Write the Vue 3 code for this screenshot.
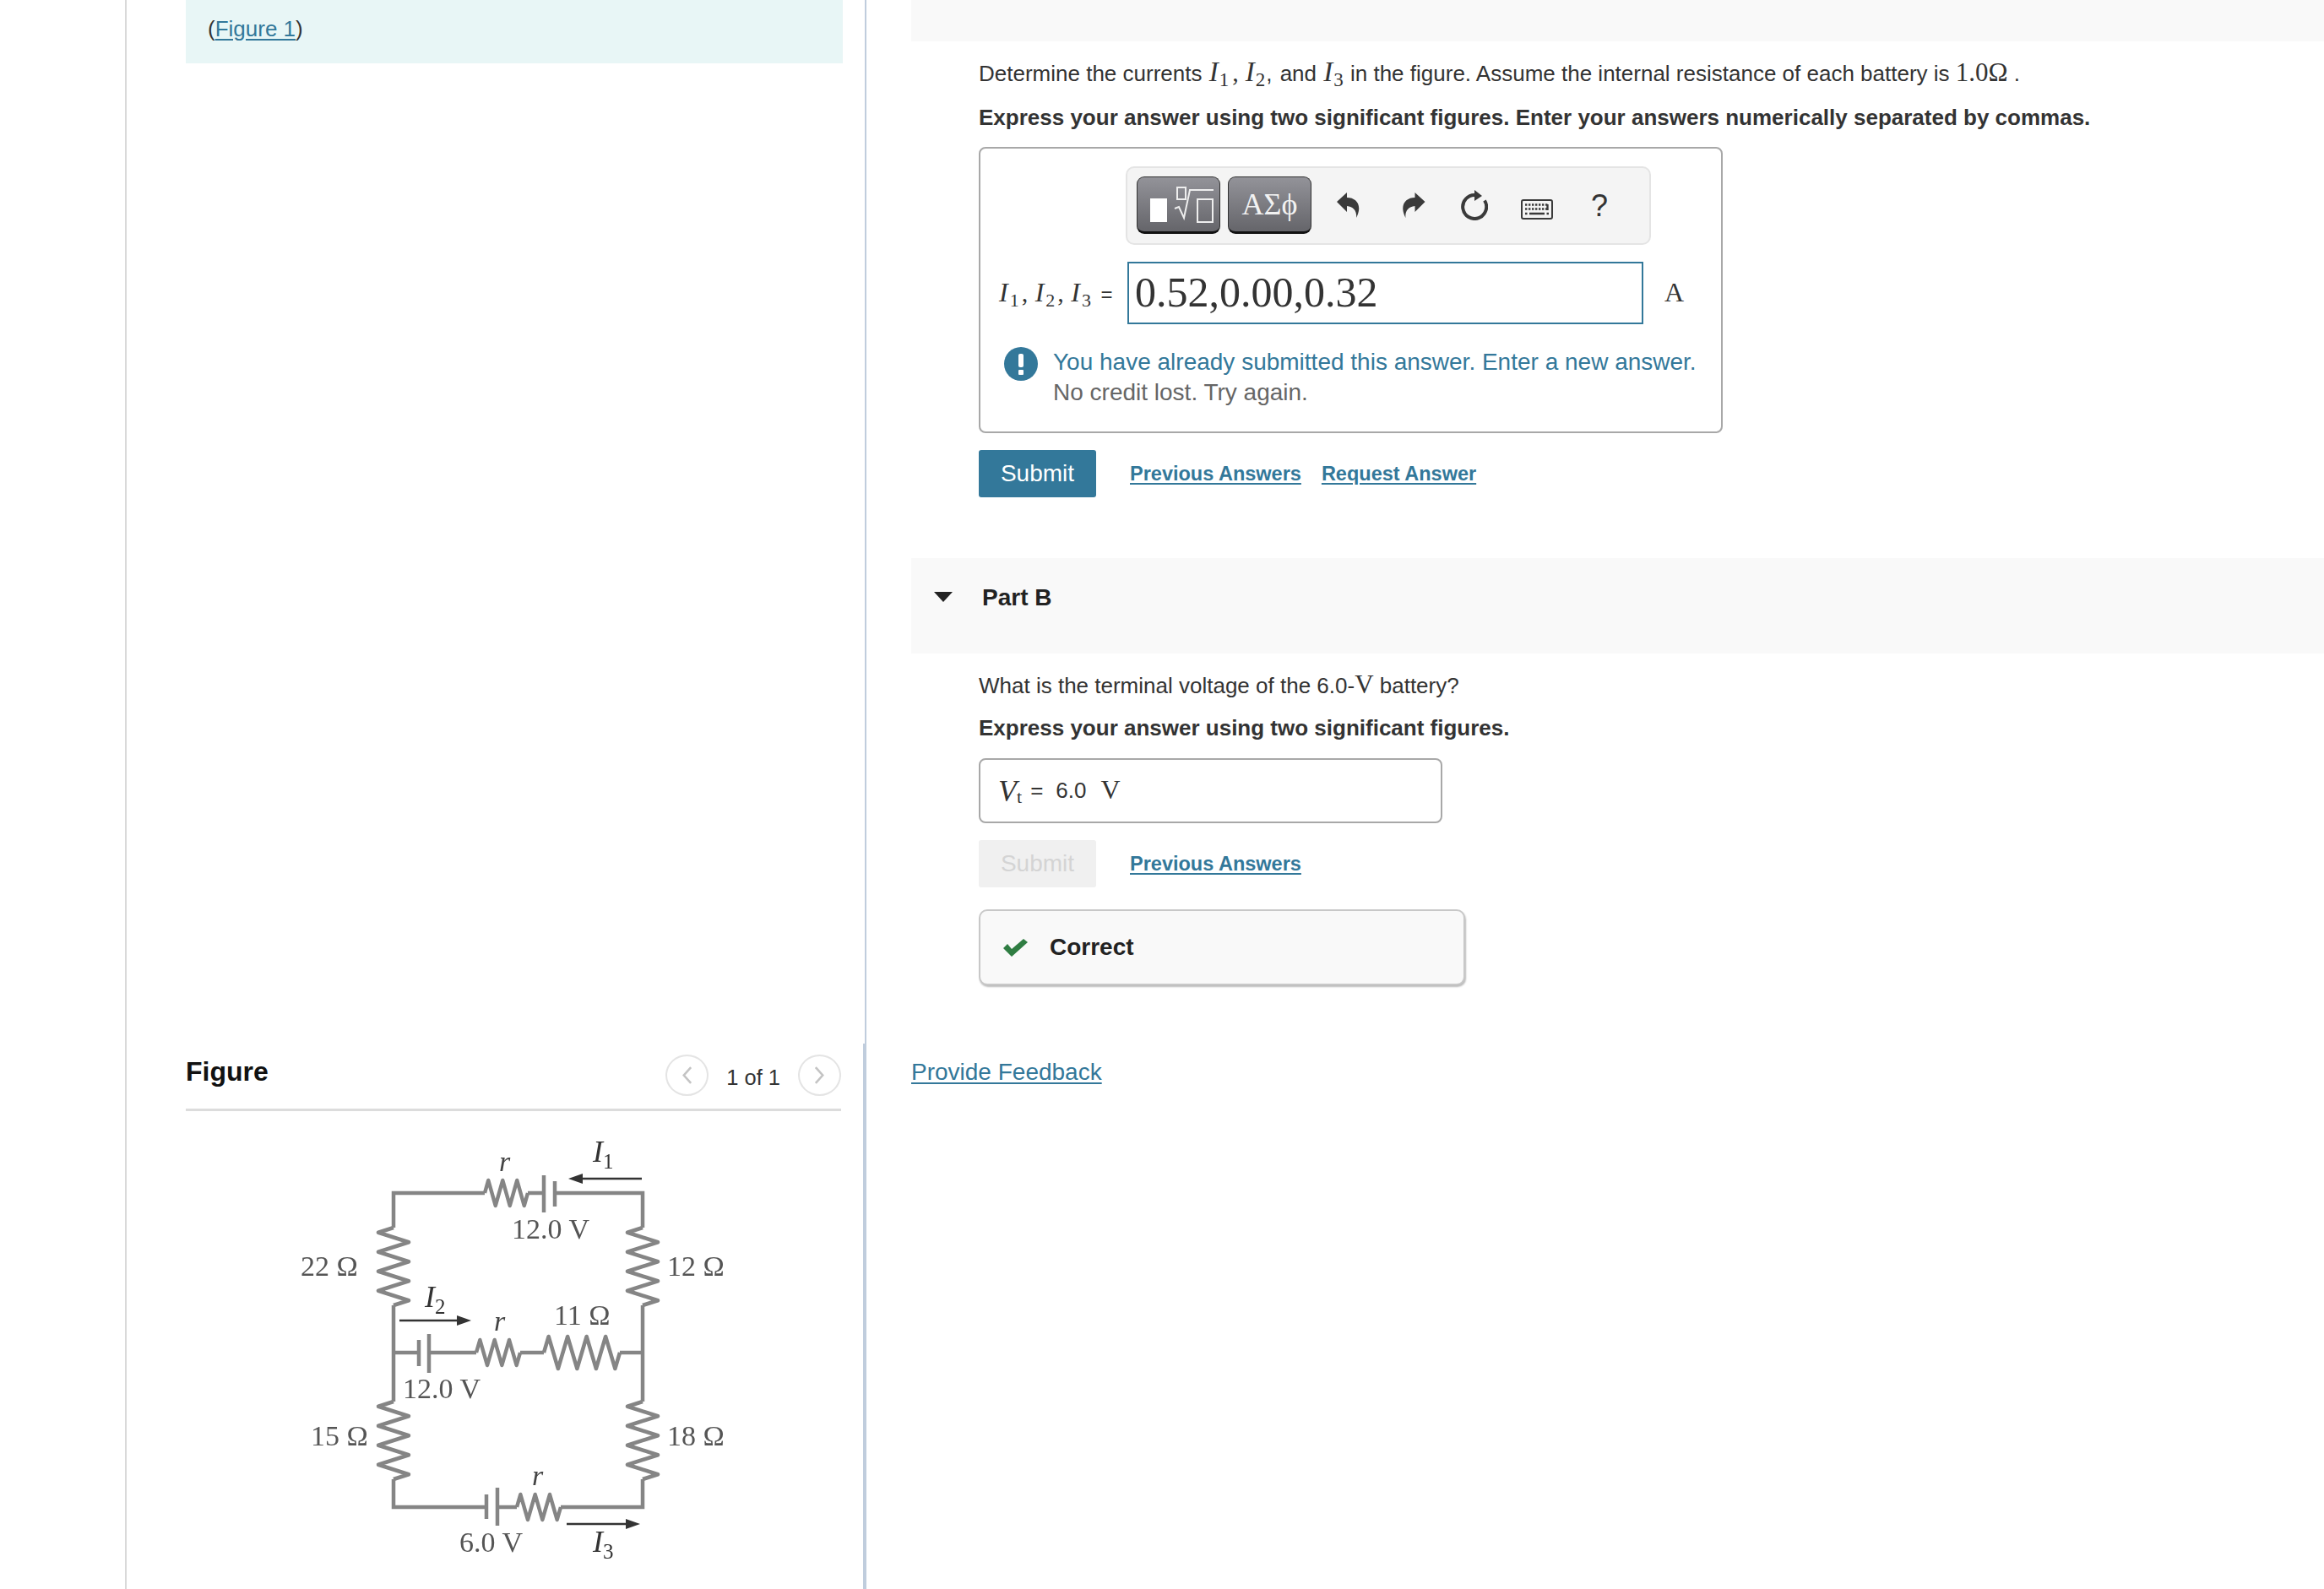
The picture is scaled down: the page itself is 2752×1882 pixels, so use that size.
<script setup>
function zz(a, b, c, amp, n, vertical) {
  const pts = [[a, c]]
  const total = 2 * n
  for (let i = 0; i < total; i++) {
    const t = a + ((b - a) * (i + 0.5)) / total
    const o = i % 2 === 0 ? -amp : amp
    pts.push([t, c + o])
  }
  pts.push([b, c])
  return pts.map((p) => (vertical ? `${p[1]},${p[0]}` : `${p[0]},${p[1]}`)).join(' ')
}
const wires = [
  'M466 1454V1413H574', 'M625 1413H644', 'M657 1413H761V1454',
  'M761 1546V1660', 'M761 1752V1785H664', 'M576 1785H466V1752',
  'M466 1660V1546', 'M466 1602H496', 'M508 1602H564', 'M616 1602H644', 'M734 1602H761',
  'M612 1785H589'
]
const zigs = [
  zz(574, 625, 1413, 15, 3, false),
  zz(564, 616, 1602, 15, 3, false),
  zz(644, 734, 1602, 19, 4, false),
  zz(612, 664, 1785, 15, 3, false),
  zz(1454, 1546, 466, 18, 4, true),
  zz(1660, 1752, 466, 18, 4, true),
  zz(1454, 1546, 761, 18, 4, true),
  zz(1660, 1752, 761, 18, 4, true)
]
const plates = [
  [644, 1392, 1436], [657, 1399, 1429],
  [496, 1587, 1618], [508, 1580, 1626],
  [576, 1770, 1799], [589, 1762, 1807]
]
const labels = [
  ['12.0 V', 606, 1467], ['22 Ω', 356, 1511], ['12 Ω', 790, 1511],
  ['11 Ω', 656, 1569], ['12.0 V', 477, 1656], ['15 Ω', 368, 1712],
  ['18 Ω', 790, 1712], ['6.0 V', 544, 1838]
]
const rs = [[591, 1387], [585, 1576], [630, 1759]]
const currents = [['1', 702, 1376], ['2', 503, 1548], ['3', 702, 1838]]
</script>

<template>
  <div class="page">
    <aside class="left">
      <div class="left-top">
        <div class="teal">(<a class="link">Figure 1</a>)</div>
      </div>
      <div class="left-bottom">
        <header class="fig-head">
          <h2>Figure</h2>
          <div class="pager">
            <span class="circle">
              <svg viewBox="0 0 14 24" class="chev"><path d="M12 2 3 12l9 10" /></svg>
            </span>
            <span class="count">1 of 1</span>
            <span class="circle">
              <svg viewBox="0 0 14 24" class="chev"><path d="M2 2l9 10-9 10" /></svg>
            </span>
          </div>
        </header>
        <svg class="circuit" viewBox="220 1318 776 564" width="776" height="564">
          <g fill="none" stroke="#858585" stroke-width="4.5" stroke-linejoin="round">
            <path v-for="(w, i) in wires" :key="i" :d="w" stroke-linejoin="miter" />
            <polyline v-for="(z, i) in zigs" :key="'z' + i" :points="z" />
            <path v-for="(p, i) in plates" :key="'p' + i" :d="`M${p[0]} ${p[1]}V${p[2]}`" />
          </g>
          <g stroke="#333" stroke-width="2.5" fill="#333">
            <path d="M760 1396H680" />
            <path d="M473 1564H550" />
            <path d="M671 1805H750" />
            <polygon points="673,1396 690,1390 690,1402" stroke="none" />
            <polygon points="558,1564 541,1558 541,1570" stroke="none" />
            <polygon points="758,1805 741,1799 741,1811" stroke="none" />
          </g>
          <text v-for="(l, i) in labels" :key="'l' + i" :x="l[1]" :y="l[2]" class="ct">{{ l[0] }}</text>
          <text v-for="(r, i) in rs" :key="'r' + i" :x="r[0]" :y="r[1]" class="ct em">r</text>
          <text v-for="(c, i) in currents" :key="'c' + i" :x="c[1]" :y="c[2]" class="ct em cur">I<tspan dy="8" class="csub">{{ c[0] }}</tspan></text>
        </svg>
      </div>
    </aside>

    <main class="right">
      <div class="strip"></div>
      <section class="content first">
        <p class="para">
          Determine the currents <span class="mi">I</span><sub class="ms">1</sub><span class="mn">,</span>
          <span class="mi i2">I</span><sub class="ms">2</sub>,<span class="and"> and</span> <span class="mi">I</span><sub class="ms">3</sub> in the figure. Assume the internal resistance of each battery is <span class="mt">1.0Ω</span> .
        </p>
        <p class="para strong gap1">Express your answer using two significant figures. Enter your answers numerically separated by commas.</p>

        <div class="answer">
          <div class="toolbar">
            <button class="tb-btn">
              <svg viewBox="0 0 95 64" width="95" height="64">
                <rect x="14" y="25" width="20" height="28" fill="#fff" />
                <g fill="none" stroke="#eee" stroke-width="2">
                  <rect x="46" y="12" width="10" height="14" />
                  <path d="M43 37l5-2 6 13 7-33h28" />
                  <rect x="70" y="26" width="18" height="27" />
                </g>
              </svg>
            </button>
            <button class="tb-btn greek">ΑΣϕ</button>
            <svg class="ic undo" viewBox="0 0 27 31" width="27" height="31">
              <path d="M0 12 12 1v6c11 0 19 9 11 24 1-8-3-13-11-14v7z" fill="#3a3a3a" />
            </svg>
            <svg class="ic redo" viewBox="0 0 27 31" width="28" height="31">
              <path d="M27 12 15 1v6C4 7-4 16 4 31c-1-8 3-13 11-14v7z" fill="#3a3a3a" />
            </svg>
            <svg class="ic reset" viewBox="0 0 32 36" width="32" height="36">
              <path d="M28 12.5A14 14 0 1 1 17 6" fill="none" stroke="#3a3a3a" stroke-width="4" />
              <polygon points="16,0 25,7 16,13" fill="#3a3a3a" />
            </svg>
            <svg class="ic kbd" viewBox="0 0 38 24" width="38" height="24">
              <rect x="1" y="1" width="36" height="22" rx="2" fill="none" stroke="#3a3a3a" stroke-width="2" />
              <g stroke="#3a3a3a" stroke-width="2.4" fill="none">
                <path d="M5 6.5h28" stroke-dasharray="2.4 1.6" />
                <path d="M5 11.5h26" stroke-dasharray="2.4 1.6" />
                <path d="M31.5 6v7" />
                <path d="M5 17h2.5M10 17h18M30.5 17h2.5" />
              </g>
            </svg>
            <span class="help">?</span>
          </div>
          <div class="input-row">
            <span class="eq-label"><span class="mi lg">I</span><sub class="ms lg">1</sub>, <span class="mi lg">I</span><sub class="ms lg">2</sub>, <span class="mi lg">I</span><sub class="ms lg">3</sub> <span class="eq">=</span></span>
            <div class="input">0.52,0.00,0.32</div>
            <span class="unit">A</span>
          </div>
          <div class="msg">
            <svg class="warn" viewBox="0 0 40 40" width="40" height="40">
              <circle cx="20" cy="20" r="20" fill="#33789a" />
              <rect x="17" y="8" width="6" height="16" rx="2" fill="#fff" />
              <rect x="17" y="27" width="6" height="6" rx="1" fill="#fff" />
            </svg>
            <div>
              <div class="msg-a">You have already submitted this answer. Enter a new answer.</div>
              <div class="msg-b">No credit lost. Try again.</div>
            </div>
          </div>
        </div>

        <div class="actions">
          <button class="submit">Submit</button>
          <a class="act-link">Previous Answers</a>
          <a class="act-link second">Request Answer</a>
        </div>
      </section>

      <div class="band">
        <span class="tri"></span>
        <span class="part">Part B</span>
      </div>

      <section class="content">
        <p class="para q">What is the terminal voltage of the <span class="sans">6.0-</span><span class="mt">V</span> battery?</p>
        <p class="para strong gap2">Express your answer using two significant figures.</p>
        <div class="vt">
          <span class="vt-v">V</span><sub class="vt-s">t</sub>
          <span class="vt-eq">=</span>
          <span class="vt-n">6.0</span>
          <span class="vt-u">V</span>
        </div>
        <div class="actions a2">
          <button class="submit off">Submit</button>
          <a class="act-link">Previous Answers</a>
        </div>
        <div class="correct">
          <svg viewBox="0 0 29 21" width="29" height="21">
            <path d="M0 11 5 6l5 6L24 0l5 4-19 17z" fill="#2f7d42" />
          </svg>
          <strong>Correct</strong>
        </div>
      </section>
      <a class="feedback">Provide Feedback</a>
    </main>
  </div>
</template>

<style>
html, body { margin: 0; background: #fff; overflow: hidden; }
</style>

<style scoped>
.page {
  width: 2752px;
  height: 1882px;
  overflow: hidden;
  display: flex;
  background: #fff;
  color: #333;
  font-family: "Liberation Sans", Arial, sans-serif;
  font-size: 26px;
}
.left {
  margin-left: 148px;
  width: 878px;
  flex: none;
  border-left: 2px solid #d9d9d9;
  box-sizing: border-box;
  display: flex;
  flex-direction: column;
}
.left-top {
  height: 1236px;
  box-sizing: border-box;
  padding-left: 70px;
  border-right: 2px solid #c0cddd;
}
.teal {
  width: 778px;
  height: 75px;
  box-sizing: border-box;
  background: #e8f6f6;
  padding: 16px 0 0 26px;
  font-size: 26px;
  line-height: 36px;
}
.link { color: #33789a; text-decoration: underline; text-underline-offset: 3px; }
.left-bottom {
  flex: 1;
  box-sizing: border-box;
  padding: 13px 0 0 70px;
  border-right: 4px solid #c0cddd;
}
.fig-head {
  width: 776px;
  height: 67px;
  box-sizing: border-box;
  border-bottom: 3px solid #dcdcdc;
  display: flex;
  justify-content: space-between;
  color: #111;
}
.fig-head h2 { margin: 2px 0 0; font-size: 32px; line-height: 36px; font-weight: 700; }
.pager { display: flex; align-items: flex-start; }
.circle {
  width: 51px;
  height: 49px;
  box-sizing: border-box;
  border: 2px solid #e4e4e4;
  border-radius: 50%;
  display: flex;
  align-items: center;
  justify-content: center;
}
.chev { width: 13px; height: 23px; fill: none; stroke: #c4c4c4; stroke-width: 2.8; }
.count { margin: 10px 21px 0 21px; font-size: 25.5px; line-height: 34px; color: #333; }
.circuit { display: block; margin-top: 2px; filter: blur(0.6px); }
.ct { font-family: "Liberation Serif", "Times New Roman", serif; font-size: 34px; fill: #555; }
.em { font-style: italic; fill: #444; }
.cur { font-size: 36px; fill: #333; }
.csub { font-size: 25px; font-style: normal; }

.right { flex: 1; min-width: 0; margin-left: 53px; display: flex; flex-direction: column; }
.strip { height: 49px; background: #f9f9f9; flex: none; }
.content { padding-left: 80px; flex: none; }
.content.first { padding-top: 18px; }
.para { margin: 0; height: 36px; line-height: 36px; color: #333; white-space: nowrap; font-size: 26px; }
.strong { font-weight: 700; }
.gap1 { margin-top: 18px; }
.mi { font-family: "Liberation Serif", serif; font-style: italic; font-size: 33px; margin-left: 1px; letter-spacing: 1px; }
.mi.i2 { margin-left: 8px; }
.and { margin-left: 2px; }
.mn { font-family: "Liberation Serif", serif; font-size: 30px; margin-left: 3px; }
.ms { font-family: "Liberation Serif", serif; font-size: 23px; line-height: 0; vertical-align: -6px; margin-right: 1px; }
.mt { font-family: "Liberation Serif", serif; font-size: 31px; }
.sans { font-size: 26px; }
.answer {
  margin-top: 17px;
  width: 881px;
  height: 339px;
  box-sizing: border-box;
  border: 2px solid #a8a8a8;
  border-radius: 8px;
  padding: 21px 0 0 20px;
}
.toolbar {
  margin-left: 152px;
  width: 622px;
  height: 93px;
  box-sizing: border-box;
  background: #f4f4f4;
  border: 2px solid #e4e4e4;
  border-radius: 10px;
  display: flex;
  align-items: flex-start;
  padding: 10px 0 0 11px;
}
.tb-btn {
  width: 99px;
  height: 68px;
  padding: 0;
  box-sizing: border-box;
  border: 1px solid #333;
  border-bottom: 3px solid #111;
  border-radius: 9px;
  background: linear-gradient(#939399, #65656a);
  color: #f2f2f2;
  display: flex;
  align-items: center;
  justify-content: center;
}
.greek {
  margin-left: 9px;
  font-family: "Liberation Serif", serif;
  font-size: 36px;
}
.ic { flex: none; display: block; }
.undo { margin: 18px 0 0 30px; }
.redo { margin: 18px 0 0 50px; }
.reset { margin: 16px 0 0 42px; }
.kbd { margin: 27px 0 0 39px; }
.help { margin: 15px 0 0 45px; font-size: 36px; line-height: 40px; color: #333; }
.input-row { display: flex; align-items: center; margin-top: 20px; height: 74px; }
.eq-label { width: 154px; flex: none; margin-top: -2px; font-family: "Liberation Serif", serif; font-size: 30px; white-space: nowrap; padding-left: 1px; box-sizing: border-box; }
.mi.lg { font-size: 32px; letter-spacing: 2px; margin-left: 1px; }
.ms.lg { font-size: 22px; margin-right: 3px; }
.eq { font-family: "Liberation Sans", sans-serif; font-size: 24px; margin-left: 1px; }
.input {
  width: 611px;
  height: 74px;
  box-sizing: border-box;
  border: 2px solid #33789a;
  padding-left: 7px;
  font-family: "Liberation Serif", serif;
  font-size: 50px;
  line-height: 68px;
  color: #333;
}
.unit { margin-left: 25px; margin-top: -2px; font-family: "Liberation Serif", serif; font-size: 32px; }
.msg { display: flex; margin-top: 27px; margin-left: 8px; }
.warn { flex: none; margin: 0 18px 0 0; }
.msg-a, .msg-b { line-height: 36px; font-size: 28px; white-space: nowrap; }
.msg-a { color: #33789a; }
.msg-b { color: #666; }
.actions { display: flex; align-items: center; margin-top: 20px; height: 56px; }
.submit {
  width: 139px;
  height: 56px;
  padding: 0;
  border: none;
  border-radius: 3px;
  background: #33789a;
  color: #fff;
  font-family: "Liberation Sans", sans-serif;
  font-size: 28px;
}
.submit.off { background: #f0f0f0; color: #d4d4d4; }
.act-link {
  margin-left: 40px;
  color: #33789a;
  font-weight: 700;
  font-size: 23.5px;
  text-decoration: underline;
  text-underline-offset: 3px;
}
.act-link.second { margin-left: 24px; }
.band {
  margin-top: 72px;
  height: 113px;
  flex: none;
  background: #f9f9f9;
  box-sizing: border-box;
  padding: 30px 0 0 27px;
  display: flex;
  align-items: flex-start;
}
.tri {
  width: 0;
  height: 0;
  margin-top: 10px;
  border-left: 11px solid transparent;
  border-right: 11px solid transparent;
  border-top: 12px solid #222;
}
.part { margin-left: 35px; font-size: 28px; line-height: 34px; font-weight: 700; color: #222; }
.q { margin-top: 19px; }
.gap2 { margin-top: 15px; }
.vt {
  margin-top: 18px;
  width: 549px;
  height: 77px;
  box-sizing: border-box;
  border: 2px solid #a8a8a8;
  border-radius: 8px;
  padding-left: 21px;
  display: flex;
  align-items: center;
}
.vt-v { font-family: "Liberation Serif", serif; font-style: italic; font-size: 36px; }
.vt-s { font-family: "Liberation Serif", serif; font-size: 22px; line-height: 0; margin-top: 14px; }
.vt-eq { margin-left: 10px; font-size: 26px; }
.vt-n { margin-left: 15px; font-size: 26px; }
.vt-u { margin-left: 17px; font-family: "Liberation Serif", serif; font-size: 32px; margin-top: -3px; }
.a2 { margin-top: 20px; }
.correct {
  margin-top: 26px;
  width: 576px;
  height: 90px;
  box-sizing: border-box;
  border: 2px solid #c8c8c8;
  border-radius: 10px;
  background: #f9f9f9;
  box-shadow: 1px 2px 2px #bbb;
  display: flex;
  align-items: center;
  padding-left: 27px;
  color: #222;
}
.correct strong { margin-left: 26px; font-size: 28px; }
.feedback {
  margin-top: 85px;
  align-self: flex-start;
  color: #33789a;
  font-size: 28px;
  line-height: 36px;
  text-decoration: underline;
  text-underline-offset: 3px;
}
</style>
